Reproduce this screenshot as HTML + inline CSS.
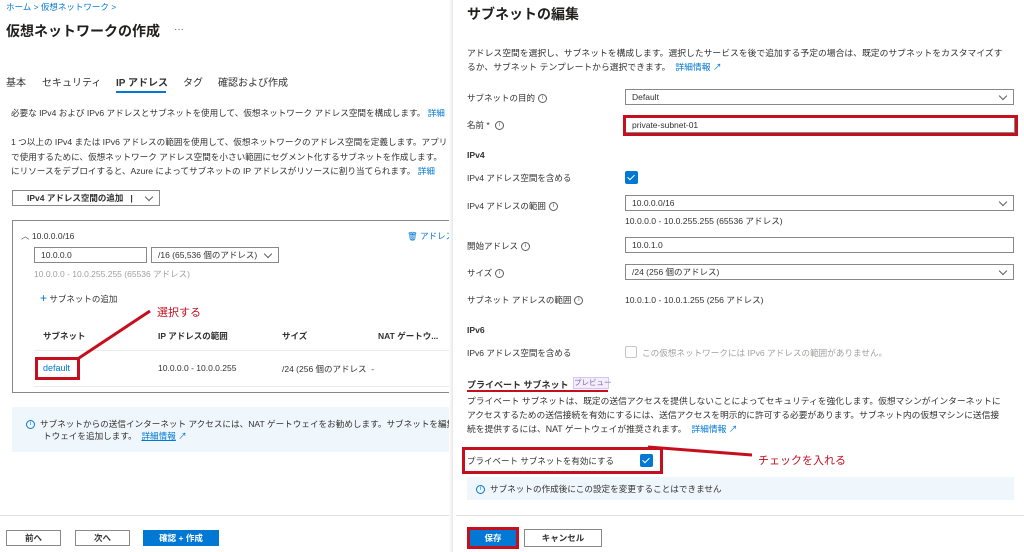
<!DOCTYPE html>
<html><head><meta charset="utf-8"><style>
*{box-sizing:border-box;margin:0;padding:0}
body{width:1024px;height:552px;overflow:hidden;background:#fff;font-family:"Liberation Sans","Noto Sans CJK JP",sans-serif;color:#323130;position:relative;font-size:9px}
.a{position:absolute;white-space:nowrap}
.blue{color:#0078d4}
.inp{position:absolute;border:1px solid #8a8886;background:#fff;height:16px;font-size:8.5px;padding:2px 6px;line-height:11px}
.sel::after{content:"";position:absolute;right:7px;top:3px;width:5px;height:5px;border-right:1px solid #605e5c;border-bottom:1px solid #605e5c;transform:rotate(45deg)}
.i{display:inline-block;width:9px;height:9px;border:1px solid #605e5c;border-radius:50%;font-size:6px;line-height:7px;text-align:center;vertical-align:middle;margin-left:3px;color:#605e5c}
.cb{position:absolute;width:13px;height:13px;background:#0078d4;border-radius:2px}
.cb::after{content:"";position:absolute;left:4px;top:2px;width:3px;height:6px;border-right:1.5px solid #fff;border-bottom:1.5px solid #fff;transform:rotate(45deg)}
.btn{position:absolute;border:1px solid #8a8886;background:#fff;font-size:8.5px;font-weight:bold;text-align:center;height:16px;line-height:14px}
.red{border:3px solid #c50f1f;position:absolute}
.lab{font-size:8.5px;color:#323130}
#L{position:absolute;left:0;top:0;width:453px;height:552px;overflow:hidden}
#R{position:absolute;left:0;top:0;width:1024px;height:552px;font-size:8.6px}
</style></head><body>
<div id="L">
<div class="a blue" style="left:6px;top:1px;font-size:8.5px">ホーム &gt; 仮想ネットワーク &gt;</div>
<div class="a" style="left:6px;top:21px;font-size:14px;font-weight:bold;color:#201f1e">仮想ネットワークの作成</div>
<div class="a" style="left:174px;top:24px;font-size:10px;color:#605e5c">···</div>
<div class="a" style="left:6px;top:74px;font-size:10px">基本</div>
<div class="a" style="left:42px;top:74px;font-size:10px">セキュリティ</div>
<div class="a" style="left:116px;top:74px;font-size:10px;font-weight:bold">IP アドレス</div>
<div class="a" style="left:116px;top:91px;width:50px;height:2px;background:#0078d4"></div>
<div class="a" style="left:183px;top:74px;font-size:10px">タグ</div>
<div class="a" style="left:218px;top:74px;font-size:10px">確認および作成</div>
<div class="a" style="left:11px;top:107px;font-size:8.6px">必要な IPv4 および IPv6 アドレスとサブネットを使用して、仮想ネットワーク アドレス空間を構成します。 <span class="blue">詳細</span></div>
<div class="a" style="left:11px;top:135px;font-size:8.6px;line-height:14.5px">1 つ以上の IPv4 または IPv6 アドレスの範囲を使用して、仮想ネットワークのアドレス空間を定義します。アプリ<br>で使用するために、仮想ネットワーク アドレス空間を小さい範囲にセグメント化するサブネットを作成します。<br>にリソースをデプロイすると、Azure によってサブネットの IP アドレスがリソースに割り当てられます。 <span class="blue">詳細</span></div>
<div class="btn sel" style="left:12px;top:190px;width:148px;text-align:left;padding-left:14px">IPv4 アドレス空間の追加 &nbsp;&nbsp;|</div>
<div class="a" style="left:12px;top:220px;width:460px;height:173px;border:1px solid #8a8886"></div>
<div class="a" style="left:21px;top:230px;font-size:8.5px"><span style="color:#605e5c">︿</span> 10.0.0.0/16</div>
<div class="a" style="left:407px;top:230px;font-size:8.5px"><span class="blue">🗑</span> <span class="blue">アドレス</span></div>
<div class="inp" style="left:34px;top:247px;width:113px">10.0.0.0</div>
<div class="inp sel" style="left:151px;top:247px;width:128px">/16 (65,536 個のアドレス)</div>
<div class="a" style="left:34px;top:268px;color:#a19f9d;font-size:8.5px">10.0.0.0 - 10.0.255.255 (65536 アドレス)</div>
<div class="a" style="left:40px;top:291px;font-size:8.5px"><span class="blue" style="font-size:12px">+</span> サブネットの追加</div>
<div class="a" style="left:157px;top:304px;font-size:11px;color:#c50f1f">選択する</div>
<div class="a" style="left:43px;top:330px;font-weight:bold;font-size:8.5px">サブネット</div>
<div class="a" style="left:158px;top:330px;font-weight:bold;font-size:8.5px">IP アドレスの範囲</div>
<div class="a" style="left:282px;top:330px;font-weight:bold;font-size:8.5px">サイズ</div>
<div class="a" style="left:378px;top:330px;font-weight:bold;font-size:8.5px">NAT ゲートウ...</div>
<div class="a" style="left:34px;top:350px;width:421px;height:1px;background:#edebe9"></div>
<div class="a" style="left:34px;top:386px;width:421px;height:1px;background:#edebe9"></div>
<div class="a blue" style="left:43px;top:363px">default</div>
<div class="a" style="left:158px;top:363px;font-size:8.5px">10.0.0.0 - 10.0.0.255</div>
<div class="a" style="left:282px;top:363px;font-size:8.5px">/24 (256 個のアドレス &nbsp;-</div>
<div class="red" style="left:35px;top:357px;width:45px;height:23px"></div>
<div class="a" style="left:12px;top:407px;width:443px;height:45px;background:#eff6fc"></div>
<div class="a" style="left:26px;top:418px;line-height:12px;font-size:8.6px"><span class="i" style="border-color:#0078d4;color:#0078d4;margin:0 5px 0 0">i</span>サブネットからの送信インターネット アクセスには、NAT ゲートウェイをお勧めします。サブネットを編集して<br><span style="margin-left:17px">トウェイを追加します。 &nbsp;<span class="blue" style="text-decoration:underline">詳細情報</span> <span class="blue">↗</span></span></div>
<div class="a" style="left:0;top:515px;width:455px;height:1px;background:#e1dfdd"></div>
<div class="btn" style="left:6px;top:530px;width:55px">前へ</div>
<div class="btn" style="left:75px;top:530px;width:55px">次へ</div>
<div class="btn" style="left:143px;top:530px;width:76px;background:#0078d4;border-color:#0078d4;color:#fff">確認 + 作成</div>
<div class="a" style="left:449px;top:0;width:4px;height:552px;background:linear-gradient(to right,#fff,#e8e8e8)"></div>
</div>
<svg class="a" style="left:0;top:0" width="1024" height="552"><line x1="79" y1="358" x2="150" y2="311" stroke="#c50f1f" stroke-width="3"/><line x1="648" y1="447" x2="752" y2="455" stroke="#c50f1f" stroke-width="3"/></svg>
<div id="R">
<div class="a" style="left:467px;top:4px;font-size:14px;font-weight:bold;color:#201f1e">サブネットの編集</div>
<div class="a" style="left:467px;top:46px;line-height:14px;font-size:8.8px">アドレス空間を選択し、サブネットを構成します。選択したサービスを後で追加する予定の場合は、既定のサブネットをカスタマイズす<br>るか、サブネット テンプレートから選択できます。 &nbsp;<span class="blue">詳細情報 ↗</span></div>
<div class="a lab" style="left:467px;top:92px">サブネットの目的<span class="i">i</span></div>
<div class="inp sel" style="left:625px;top:89px;width:389px">Default</div>
<div class="a lab" style="left:467px;top:119px">名前 * <span class="i">i</span></div>
<div class="inp" style="left:625px;top:117px;width:390px">private-subnet-01</div>
<div class="red" style="left:623px;top:115px;width:395px;height:21px"></div>
<div class="a" style="left:467px;top:150px;font-weight:bold">IPv4</div>
<div class="a lab" style="left:467px;top:172px">IPv4 アドレス空間を含める</div>
<div class="cb" style="left:625px;top:171px"></div>
<div class="a lab" style="left:467px;top:200px">IPv4 アドレスの範囲<span class="i">i</span></div>
<div class="inp sel" style="left:625px;top:195px;width:389px">10.0.0.0/16</div>
<div class="a" style="left:625px;top:215px">10.0.0.0 - 10.0.255.255 (65536 アドレス)</div>
<div class="a lab" style="left:467px;top:240px">開始アドレス<span class="i">i</span></div>
<div class="inp" style="left:625px;top:237px;width:389px">10.0.1.0</div>
<div class="a lab" style="left:467px;top:267px">サイズ<span class="i">i</span></div>
<div class="inp sel" style="left:625px;top:264px;width:389px">/24 (256 個のアドレス)</div>
<div class="a lab" style="left:467px;top:294px">サブネット アドレスの範囲<span class="i">i</span></div>
<div class="a" style="left:625px;top:294px">10.0.1.0 - 10.0.1.255 (256 アドレス)</div>
<div class="a" style="left:467px;top:325px;font-weight:bold">IPv6</div>
<div class="a lab" style="left:467px;top:347px">IPv6 アドレス空間を含める</div>
<div class="a" style="left:625px;top:346px;width:12px;height:12px;border:1px solid #c8c6c4;border-radius:2px"></div>
<div class="a" style="left:642px;top:347px;color:#a19f9d">この仮想ネットワークには IPv6 アドレスの範囲がありません。</div>
<div class="a" style="left:467px;top:378px;font-size:9px;font-weight:bold">プライベート サブネット</div>
<div class="a" style="left:573px;top:377px;width:36px;height:12px;background:#f3eefa;border:1px solid #d6c6ef;color:#8764b8;font-size:7.5px;text-align:center;line-height:10px">プレビュー</div>
<div class="a" style="left:467px;top:390px;width:141px;height:2px;background:#c50f1f"></div>
<div class="a" style="left:467px;top:394px;line-height:14px;font-size:8.75px">プライベート サブネットは、既定の送信アクセスを提供しないことによってセキュリティを強化します。仮想マシンがインターネットに<br>アクセスするための送信接続を有効にするには、送信アクセスを明示的に許可する必要があります。サブネット内の仮想マシンに送信接<br>続を提供するには、NAT ゲートウェイが推奨されます。 &nbsp;<span class="blue">詳細情報 ↗</span></div>
<div class="a lab" style="left:467px;top:455px">プライベート サブネットを有効にする</div>
<div class="cb" style="left:640px;top:454px"></div>
<div class="red" style="left:462px;top:447px;width:201px;height:27px"></div>
<div class="a" style="left:758px;top:452px;font-size:11px;color:#c50f1f">チェックを入れる</div>
<div class="a" style="left:467px;top:477px;width:547px;height:23px;background:#eff6fc"></div>
<div class="a" style="left:476px;top:483px"><span class="i" style="border-color:#0078d4;color:#0078d4;margin:0 5px 0 0">i</span>サブネットの作成後にこの設定を変更することはできません</div>
<div class="a" style="left:456px;top:515px;width:568px;height:1px;background:#e1dfdd"></div>
<div class="btn" style="left:467px;top:527px;width:52px;height:22px;background:#0078d4;color:#fff;border:3px solid #c50f1f;line-height:16px">保存</div>
<div class="btn" style="left:524px;top:529px;width:78px;height:18px;line-height:16px">キャンセル</div>
</div>
</body></html>
